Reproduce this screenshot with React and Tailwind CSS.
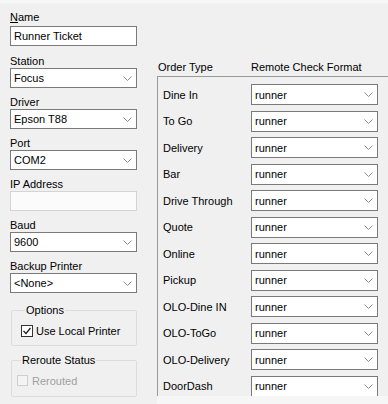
import React from 'react';

const orderTypes = [
  'Dine In',
  'To Go',
  'Delivery',
  'Bar',
  'Drive Through',
  'Quote',
  'Online',
  'Pickup',
  'OLO-Dine IN',
  'OLO-ToGo',
  'OLO-Delivery',
  'DoorDash',
];

const Chevron = () => (
  <svg width="9" height="5" viewBox="0 0 9 5" className="shrink-0">
    <polyline points="0.5,0.5 4.5,4.5 8.5,0.5" fill="none" stroke="#8a8a8a" strokeWidth="1" />
  </svg>
);

const Select = ({ value, className = '' }) => (
  <div className={`flex items-center justify-between bg-white border border-[#7a7a7a] pl-[3px] pr-[4px] ${className}`}>
    <span>{value}</span>
    <Chevron />
  </div>
);

const Field = ({ label, children, className = '' }) => (
  <div className={`flex flex-col ${className}`}>
    <div className="h-[14px]">{label}</div>
    {children}
  </div>
);

const Group = ({ title, children, className = '' }) => (
  <fieldset className={`border border-[#dcdcdc] rounded-[2px] ${className}`}>
    <legend className="ml-[4px] px-[1px]">{title}</legend>
    {children}
  </fieldset>
);

export default function App() {
  return (
    <div className="w-[388px] h-[404px] overflow-hidden bg-[#f0f0f0] text-black text-[11px] leading-[14px] font-['Liberation_Sans',Arial,sans-serif]">
      <div className="h-[3px] bg-[#f7f7f7]" />
      <div className="flex">
        {/* left column */}
        <div className="w-[127px] ml-[10px] pt-[7px] flex flex-col">
          <Field label={<span><span className="underline">N</span>ame</span>}>
            <div className="h-[20px] mt-[2px] bg-white border border-[#7a7a7a] pl-[3px] flex items-center">Runner Ticket</div>
          </Field>
          <Field label="Station" className="mt-[8px]">
            <Select value="Focus" className="h-[20px]" />
          </Field>
          <Field label="Driver" className="mt-[7px]">
            <Select value="Epson T88" className="h-[20px]" />
          </Field>
          <Field label="Port" className="mt-[7px]">
            <Select value="COM2" className="h-[20px]" />
          </Field>
          <Field label="IP Address" className="mt-[7px]">
            <div className="h-[20px] bg-[#fbfbfb] border border-[#d4d4d4]" />
          </Field>
          <Field label="Baud" className="mt-[7px]">
            <Select value="9600" className="h-[20px]" />
          </Field>
          <Field label="Backup Printer" className="mt-[7px]">
            <Select value="<None>" className="h-[20px]" />
          </Field>

          <Group title="Options" className="mt-[10px] ml-[1px] pt-[7px] pb-[8px] pl-[9px]">
            <label className="flex items-center h-[13px] gap-[3px]">
              <span className="w-[12px] h-[12px] border border-[#333] bg-white flex items-center justify-center">
                <svg width="10" height="10" viewBox="0 0 10 10">
                  <polyline points="1.5,5 4,7.5 8.5,2" fill="none" stroke="#222" strokeWidth="1.3" />
                </svg>
              </span>
              Use Local Printer
            </label>
          </Group>

          <Group title="Reroute Status" className="mt-[7px] ml-[1px] pt-[7px] pb-[9px] pl-[5px]">
            <label className="flex items-center h-[13px] gap-[4px] text-[#a0a0a0]">
              <span className="w-[11px] h-[11px] border border-[#cfcfcf] bg-[#f4f4f4]" />
              Rerouted
            </label>
          </Group>
        </div>

        {/* right column */}
        <div className="flex-1 ml-[20px] pt-[57px] flex flex-col">
          <div className="flex h-[14px]">
            <div className="w-[94px] pl-[1px]">Order Type</div>
            <div>Remote Check Format</div>
          </div>
          <div className="mt-[2px] h-[320px] border-l border-t border-[#9a9a9a] pt-[7px] flex flex-col gap-[5.5px]">
            {orderTypes.map((t) => (
              <div key={t} className="flex items-center h-[21px]">
                <div className="w-[93px] pl-[5px]">{t}</div>
                <Select value="runner" className="w-[127px] h-[21px]" />
              </div>
            ))}
          </div>
          <div className="h-[8px] bg-[#f6f6f6]" />
        </div>
      </div>
    </div>
  );
}
